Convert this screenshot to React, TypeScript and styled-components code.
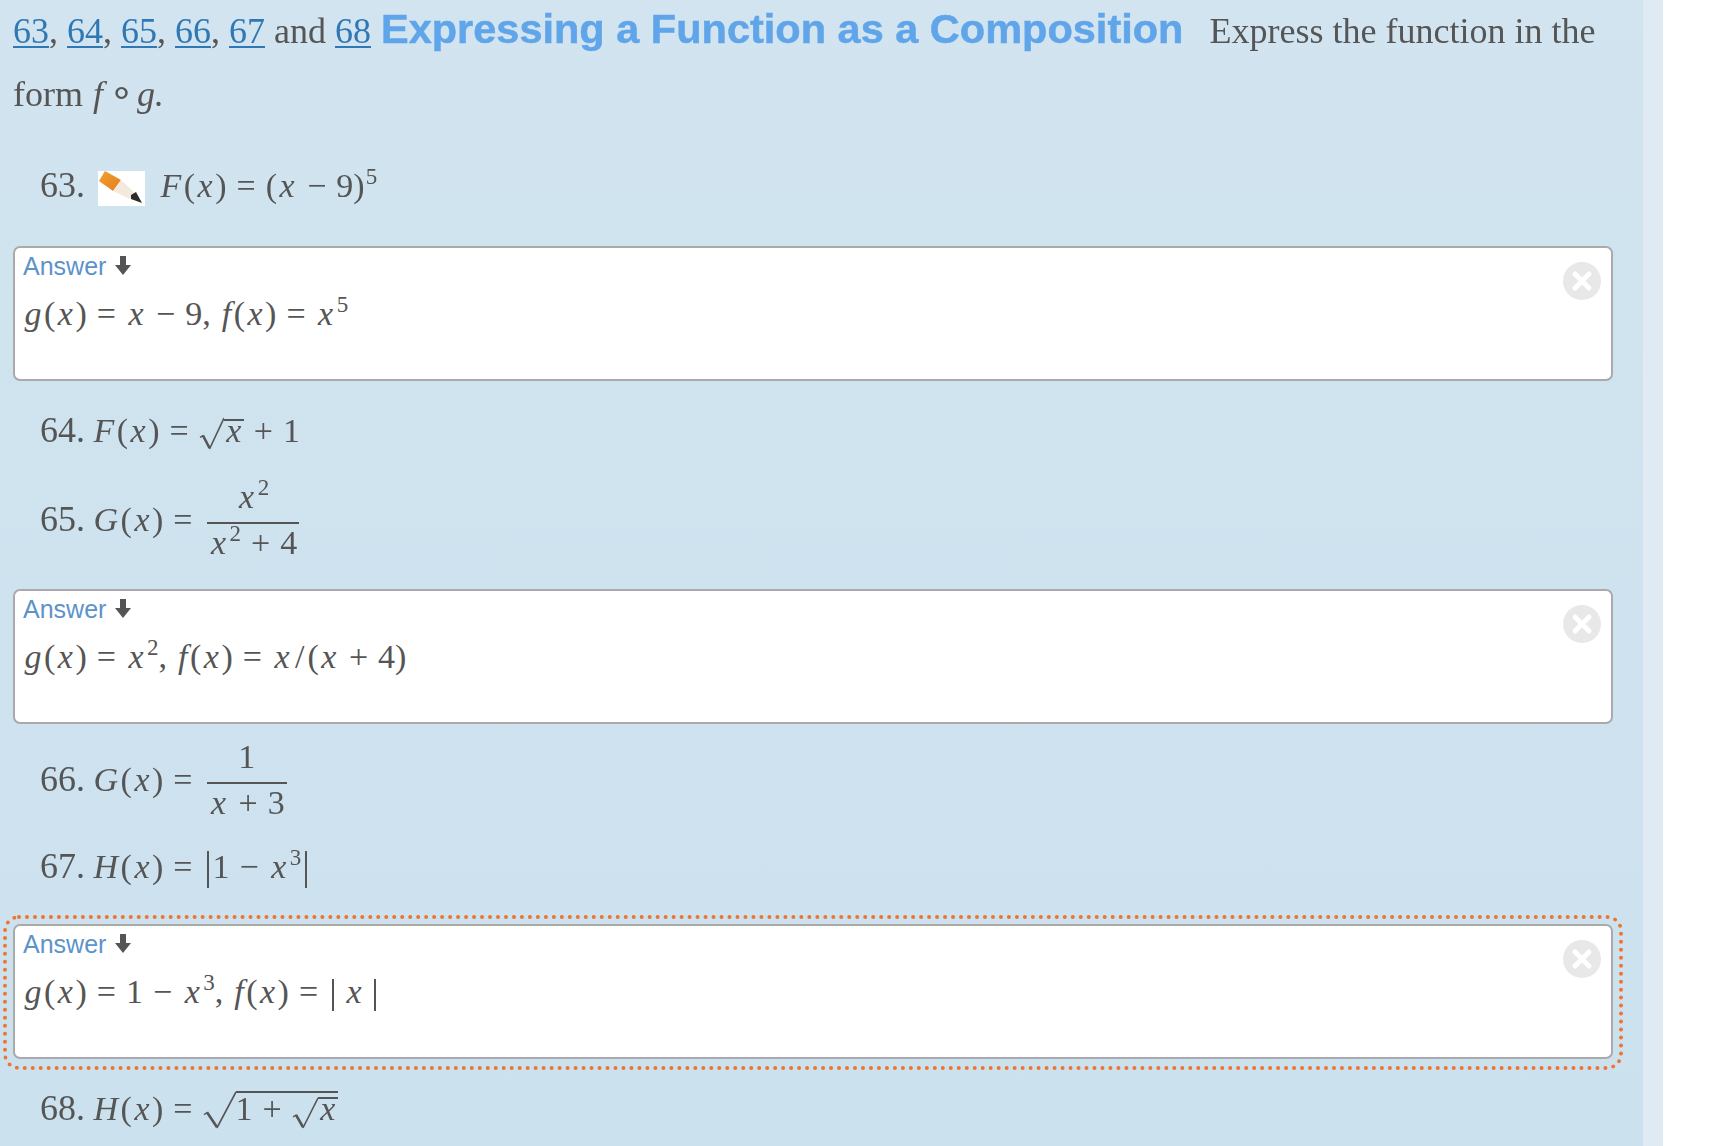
import React from "react";
import styled, { createGlobalStyle } from "styled-components";

const Global = createGlobalStyle`
  html, body { margin: 0; padding: 0; background: #fff; }
  body { width: 1728px; height: 1146px; overflow: hidden; font-family: "Liberation Serif", "Times New Roman", serif; color: #555; }
`;
const Page = styled.div`display: flex; align-items: stretch; height: 1146px;`;
const Panel = styled.main`
  width: 1643px; box-sizing: border-box; padding: 0 30px 0 13px;
  background: linear-gradient(#d1e4f0, #cce1ee);
`;
const Content = styled.div`filter: blur(0.4px);`;
const Stripe = styled.div`width: 20px; background: #e0eaf3;`;
const Intro = styled.p`margin: 0; font-size: 36px; line-height: 63px; white-space: nowrap;`;
const Ref = styled.a`color: #2f78b4; text-decoration: underline; text-decoration-thickness: 2px; text-underline-offset: 3px;`;
const Title = styled.span`
  font-family: "Liberation Sans", Arial, sans-serif; font-weight: 700; font-size: 41.5px; line-height: 1;
  color: #60a5e9; margin: 0 26px 0 10px; -webkit-text-stroke: 0.5px #60a5e9;
`;
const Compose = styled.span`margin: 0 -7px 0 -2px; font-size: 40px; line-height: 0;`;
const FormVar = styled.i`font-style: italic; margin: 0 -1px 0 1px;`;
const Item = styled.div<{ $top: number }>`
  margin-top: ${(p) => p.$top}px; padding-left: 27px; font-size: 36px; line-height: 38px; white-space: nowrap;
`;
const Math = styled.span`font-size: 34px; line-height: 36px;`;
const Lead = styled(Math)`margin-left: -3px;`;
const I = styled.i`font-style: italic; margin: 0 2.5px;`;
const Op = styled.span<{ $gap?: number }>`margin: 0 ${(p) => p.$gap ?? 10}px;`;
const Sup = styled.sup`font-size: 23px; line-height: 0; vertical-align: 13px; margin-left: 1px;`;
const Frac = styled.span`
  display: inline-flex; flex-direction: column; align-items: stretch; vertical-align: middle; margin-left: 4px; text-align: center;
`;
const Num = styled.span`display: block; height: 38px; line-height: 25px;`;
const Rule = styled.span`display: block; height: 2px; background: #555;`;
const Den = styled.span`display: block; height: 38px; line-height: 37px; padding: 0 2px; box-sizing: border-box;`;
const RootSign = styled.svg<{ $drop: number }>`vertical-align: ${(p) => -p.$drop}px; fill: none; stroke: #555;`;
const Radicand = styled.span<{ $lh: number }>`
  display: inline-block; border-top: 2px solid #555; line-height: ${(p) => p.$lh}px;
`;
const Bar = styled.span<{ $h: number; $drop: number }>`
  display: inline-block; width: 2px; height: ${(p) => p.$h}px; background: #555;
  vertical-align: ${(p) => -p.$drop}px; margin: 0 4px;
`;
const Pencil = styled.svg`vertical-align: -9px; margin: 0 16px 0 13px;`;

const Box = styled.section`
  position: relative; box-sizing: border-box; height: 135px; padding: 3px 8px 0 10px;
  background: #fff; border: 2px solid #aaa; border-radius: 7px;
`;
const SpacedBox = styled(Box)<{ $top: number }>`margin-top: ${(p) => p.$top}px;`;
const Label = styled.div`
  display: flex; align-items: center; gap: 9px; height: 30px; line-height: 30px; margin-left: -2px;
  font-family: "Liberation Sans", Arial, sans-serif; font-size: 25px; color: #5c93c9;
`;
const Shown = styled.div`margin-top: 15px; line-height: 40px; white-space: nowrap; margin-left: -3px;`;
const Close = styled.svg`position: absolute; top: 14px; right: 10px;`;
const Focus = styled.div`
  margin: 27px -10px 0 -10px; padding: 5px 6px 7px 6px; border: 4px dotted #ee7430; border-radius: 16px;
`;

function Root({ w, h, drop, lh, children }: { w: number; h: number; drop: number; lh: number; children: React.ReactNode }) {
  return (
    <>
      <RootSign $drop={drop} width={w} height={h} viewBox={`0 0 ${w} ${h}`}>
        <path d={`M1 ${h * 0.62} L4.5 ${h * 0.56}`} strokeWidth="1.4" />
        <path d={`M4 ${h * 0.56} L${w * 0.42} ${h - 2}`} strokeWidth="2.6" />
        <path d={`M${w * 0.42} ${h - 1} L${w} 1`} strokeWidth="1.6" />
      </RootSign>
      <Radicand $lh={lh}>{children}</Radicand>
    </>
  );
}

function Answer({ children }: { children: React.ReactNode }) {
  return (
    <>
      <Label>
        Answer
        <svg width="16" height="20" viewBox="0 0 16 20"><path d="M5 0h6v9h5l-8 10L0 9h5z" fill="#555" /></svg>
      </Label>
      <Shown><Math>{children}</Math></Shown>
      <Close width="38" height="38" viewBox="0 0 38 38">
        <circle cx="19" cy="19" r="19" fill="#e8e8e8" />
        <path d="M12 12l14 14M26 12L12 26" stroke="#fff" strokeWidth="5" strokeLinecap="round" />
      </Close>
    </>
  );
}

const Fx = ({ n }: { n: string }) => <><I>{n}</I>(<I>x</I>)</>;

export default function App() {
  return (
    <Page>
      <Global />
      <Panel>
        <Content>
          <Intro>
            <Ref>63</Ref>, <Ref>64</Ref>, <Ref>65</Ref>, <Ref>66</Ref>, <Ref>67</Ref> and <Ref>68</Ref>
            <Title>Expressing a Function as a Composition</Title>
            Express the function in the
            <br />
            form <FormVar>f</FormVar> <Compose>∘</Compose> <FormVar>g</FormVar>.
          </Intro>

          <Item $top={40}>
            63.
            <Pencil width="47" height="35" viewBox="0 0 47 35">
              <defs>
                <linearGradient id="lead" x1="0" y1="0" x2="1" y2="1">
                  <stop offset="0" stopColor="#f0a030" />
                  <stop offset="1" stopColor="#e57f20" />
                </linearGradient>
              </defs>
              <rect width="47" height="35" fill="#fff" />
              <path d="M1 10 L7 0 L23 9 L15 20 Z" fill="url(#lead)" />
              <path d="M15 20 L23 9 L37 22 L32 28 Z" fill="#f3e9dc" />
              <path d="M33 24 L38 21 L44 32 L33 28 Z" fill="#2b2b2b" />
            </Pencil>
            <Lead><Fx n="F" /><Op>=</Op>(<I>x</I><Op>−</Op>9)<Sup>5</Sup></Lead>
          </Item>
          <SpacedBox $top={40}>
            <Answer><I>g</I>(<I>x</I>)<Op>=</Op><I>x</I><Op>−</Op>9, <Fx n="f" /><Op>=</Op><I>x</I><Sup>5</Sup></Answer>
          </SpacedBox>

          <Item $top={30}>
            64. <Lead><Fx n="F" /><Op>=</Op><Root w={25} h={33} drop={8} lh={19}><I>x</I></Root><Op>+</Op>1</Lead>
          </Item>
          <Item $top={34}>
            65. <Lead><Fx n="G" /><Op>=</Op>
              <Frac>
                <Num><I>x</I><Sup>2</Sup></Num>
                <Rule />
                <Den><I>x</I><Sup>2</Sup><Op>+</Op>4</Den>
              </Frac>
            </Lead>
          </Item>
          <SpacedBox $top={27}>
            <Answer><I>g</I>(<I>x</I>)<Op>=</Op><I>x</I><Sup>2</Sup>, <Fx n="f" /><Op>=</Op><I>x</I><Op $gap={3}>/</Op>(<I>x</I><Op>+</Op>4)</Answer>
          </SpacedBox>

          <Item $top={20}>
            66. <Lead><Fx n="G" /><Op>=</Op>
              <Frac>
                <Num>1</Num>
                <Rule />
                <Den><I>x</I><Op>+</Op>3</Den>
              </Frac>
            </Lead>
          </Item>
          <Item $top={25}>
            67. <Lead><Fx n="H" /><Op>=</Op><Bar $h={37} $drop={10} />1<Op>−</Op><I>x</I><Sup>3</Sup><Bar $h={37} $drop={10} /></Lead>
          </Item>
          <Focus>
            <Box>
              <Answer><I>g</I>(<I>x</I>)<Op>=</Op>1<Op>−</Op><I>x</I><Sup>3</Sup>, <Fx n="f" /><Op>=</Op><Bar $h={32} $drop={8} /><Op $gap={6}><I>x</I></Op><Bar $h={32} $drop={8} /></Answer>
            </Box>
          </Focus>
          <Item $top={19}>
            68. <Lead><Fx n="H" /><Op>=</Op><Root w={33} h={38} drop={9} lh={31}>1<Op>+</Op><Root w={26} h={32} drop={9} lh={19}><I>x</I></Root></Root></Lead>
          </Item>
        </Content>
      </Panel>
      <Stripe />
    </Page>
  );
}
